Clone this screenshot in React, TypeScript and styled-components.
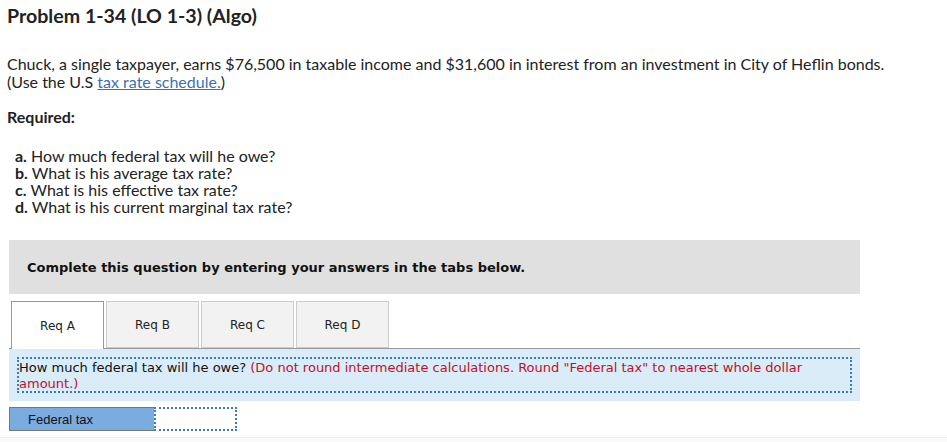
import React from "react";
import styled, { createGlobalStyle } from "styled-components";

const Global = createGlobalStyle`
  html, body { margin: 0; padding: 0; background: #fff; }
  body { font-family: "Lato", "Open Sans", sans-serif; color: #222; }
`;

const Page = styled.div`
  width: 947px;
  height: 442px;
  box-sizing: border-box;
  padding: 0 0 0 9px;
  position: relative;
  overflow: hidden;
`;

const Title = styled.h1`
  margin: 0 0 0 -2px;
  padding: 5px 0 0 0;
  font-family: "Lato", sans-serif;
  font-weight: 700;
  font-size: 19.6px;
  line-height: 22px;
  color: #222;
`;

const Intro = styled.p`
  margin: 28px 0 0 -2px;
  font-size: 16px;
  line-height: 18px;
  color: #222;
`;

const Link = styled.a`
  color: #3d6fb2;
  text-decoration: underline;
`;

const Required = styled.h2`
  margin: 17px 0 0 -2px;
  font-size: 16px;
  font-weight: 700;
  line-height: 18px;
`;

const List = styled.ul`
  list-style: none;
  margin: 21px 0 0 6px;
  padding: 0;
  font-size: 16px;
  line-height: 17px;
`;

const Item = styled.li`
  margin: 0;
`;

const Letter = styled.b`
  font-weight: 700;
`;

const Banner = styled.div`
  margin-top: 25px;
  width: 851px;
  height: 54px;
  box-sizing: border-box;
  background: #e0e0e0;
  padding: 0 0 0 18px;
  display: flex;
  align-items: center;
  font-family: "DejaVu Sans", Verdana, sans-serif;
  font-weight: 700;
  font-size: 13px;
  color: #111;
`;

const Tabs = styled.div`
  display: flex;
  gap: 2px;
  margin-top: 7px;
  padding-left: 2px;
  height: 48px;
  width: 851px;
  box-sizing: border-box;
  border-bottom: 1px solid #999;
  align-items: flex-end;
`;

const Tab = styled.div<{ $active?: boolean }>`
  width: 93px;
  height: ${(p) => (p.$active ? "48px" : "47px")};
  margin-bottom: ${(p) => (p.$active ? "-1px" : "0")};
  box-sizing: border-box;
  border: 1px solid ${(p) => (p.$active ? "#999" : "#ccc")};
  border-bottom: ${(p) => (p.$active ? "none" : "1px solid #ccc")};
  background: ${(p) => (p.$active ? "#fff" : "#f2f2f2")};
  display: flex;
  align-items: center;
  justify-content: center;
  font-family: "DejaVu Sans", Verdana, sans-serif;
  font-size: 12px;
  color: #222;
`;

const Prompt = styled.div`
  width: 851px;
  height: 52px;
  box-sizing: border-box;
  background: #d9ecf7;
  padding: 8px 8px 8px 8px;
`;

const PromptInner = styled.div`
  border: 2px dotted #3a7abf;
  height: 100%;
  box-sizing: border-box;
  padding: 1px 40px 0 0;
  font-family: "DejaVu Sans", Verdana, sans-serif;
  font-size: 13px;
  line-height: 16px;
  color: #111;
`;

const Red = styled.span`
  color: #c0102b;
`;

const AnswerRow = styled.div`
  display: flex;
  margin-top: 6px;
  height: 24px;
`;

const Label = styled.div`
  width: 145px;
  height: 24px;
  box-sizing: border-box;
  background: #7aacdf;
  border: 1px solid #777;
  border-right: none;
  padding-left: 18px;
  display: flex;
  align-items: center;
  font-family: "Liberation Sans", Arial, sans-serif;
  font-size: 13px;
  color: #111;
`;

const Input = styled.input`
  width: 83px;
  height: 24px;
  box-sizing: border-box;
  border: 2px dotted #3a7abf;
  outline: none;
  margin: 0;
  padding: 0 4px;
  background: #fff;
  font-size: 13px;
`;

const Footer = styled.div`
  position: absolute;
  left: 0;
  right: 0;
  top: 437px;
  height: 5px;
  border-top: 1px solid #eeeeee;
  background: #fafafa;
`;

export default function App() {
  return (
    <>
      <Global />
      <Page>
        <Title>Problem 1-34 (LO 1-3) (Algo)</Title>
        <Intro>
          Chuck, a single taxpayer, earns $76,500 in taxable income and $31,600 in interest from an
          investment in City of Heflin bonds.
          <br />
          (Use the U.S <Link href="#">tax rate schedule.</Link>)
        </Intro>
        <Required>Required:</Required>
        <List>
          <Item><Letter>a.</Letter> How much federal tax will he owe?</Item>
          <Item><Letter>b.</Letter> What is his average tax rate?</Item>
          <Item><Letter>c.</Letter> What is his effective tax rate?</Item>
          <Item><Letter>d.</Letter> What is his current marginal tax rate?</Item>
        </List>
        <Banner>Complete this question by entering your answers in the tabs below.</Banner>
        <Tabs>
          <Tab $active>Req A</Tab>
          <Tab>Req B</Tab>
          <Tab>Req C</Tab>
          <Tab>Req D</Tab>
        </Tabs>
        <Prompt>
          <PromptInner>
            How much federal tax will he owe?{" "}
            <Red>(Do not round intermediate calculations. Round "Federal tax" to nearest whole dollar amount.)</Red>
          </PromptInner>
        </Prompt>
        <AnswerRow>
          <Label>Federal tax</Label>
          <Input aria-label="Federal tax" />
        </AnswerRow>
        <Footer />
      </Page>
    </>
  );
}
